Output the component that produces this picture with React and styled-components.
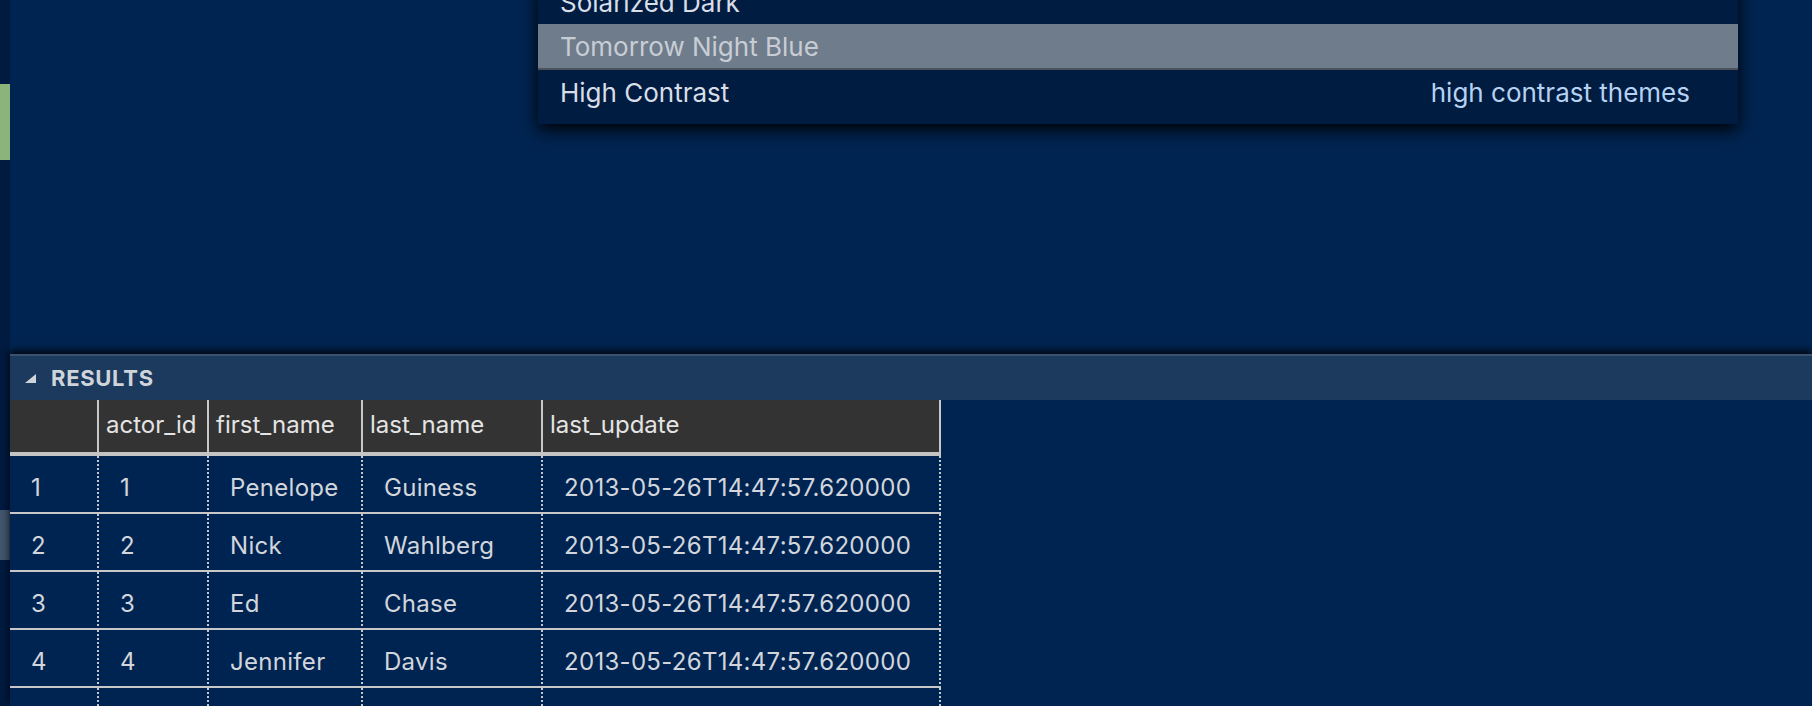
import React from "react";
import styled, { createGlobalStyle } from "styled-components";

const GlobalStyle = createGlobalStyle`
  html, body {
    margin: 0;
    padding: 0;
    background: #002451;
  }
  body {
    width: 1812px;
    height: 706px;
    overflow: hidden;
    font-family: Inter, "Noto Sans", sans-serif;
  }
`;

const Window = styled.div`
  display: flex;
  width: 1812px;
  height: 706px;
  background: #002451;
  overflow: hidden;
`;

const Gutter = styled.div`
  flex: none;
  width: 10px;
  background: #001a40;
  display: flex;
  flex-direction: column;
`;

const Marker = styled.div`
  flex: none;
  margin-top: ${(p) => p.$offset}px;
  height: ${(p) => p.$size}px;
  background: ${(p) => p.$color};
`;

const Main = styled.div`
  flex: 1;
  display: flex;
  flex-direction: column;
  min-width: 0;
`;

const EditorArea = styled.div`
  position: relative;
  flex: none;
  height: 354px;
  background: #002451;
`;

const QuickPick = styled.div`
  position: absolute;
  top: -20px;
  left: 528px;
  width: 1200px;
  padding-bottom: 10px;
  background: #001c40;
  box-shadow: 0 6px 16px rgba(0, 0, 0, 0.95);
  z-index: 2;
`;

const PickRow = styled.div`
  box-sizing: border-box;
  display: flex;
  align-items: center;
  justify-content: space-between;
  padding: 0 48px 0 22px;
  font-size: 26px;
  color: ${(p) => (p.$selected ? "#c8cdd5" : "#d8dee7")};
  background: ${(p) => (p.$selected ? "#6f7c8b" : "transparent")};
  border-top: ${(p) => (p.$separator ? "2px solid #4b525b" : "none")};
  height: ${(p) => (p.$separator ? 46 : 44)}px;
  white-space: nowrap;
`;

const PickDesc = styled.span`
  color: #b6d2f2;
`;

const Panel = styled.div`
  flex: 1;
  display: flex;
  flex-direction: column;
  background: #002451;
  box-shadow: 0 -3px 8px rgba(0, 0, 0, 0.9);
  position: relative;
  overflow: hidden;
`;

const PanelHeader = styled.div`
  flex: none;
  height: 46px;
  box-sizing: border-box;
  border-top: 2px solid #3a5172;
  background: #1c395e;
  display: flex;
  align-items: center;
  gap: 15px;
  padding-left: 15px;
  color: #cfd4db;
`;

const Twistie = styled.svg`
  width: 11px;
  height: 9px;
  margin-top: 1px;
`;

const PanelTitle = styled.span`
  font-size: 22px;
  font-weight: 700;
  letter-spacing: 0.7px;
`;

const Grid = styled.table`
  border-collapse: separate;
  border-spacing: 0;
  table-layout: fixed;
  width: 931px;
`;

const HeadCell = styled.th`
  box-sizing: border-box;
  height: 56px;
  padding: 0 7px 4px;
  text-align: left;
  font-weight: 400;
  font-size: 24px;
  color: #e4e4e4;
  background: #333333;
  border-bottom: 4px solid #c4c4c4;
  border-left: ${(p) => (p.$first ? "none" : "2px solid #c8c8c8")};
  border-right: ${(p) => (p.$last ? "2px solid #c8c8c8" : "none")};
  white-space: nowrap;
  overflow: hidden;
`;

const BodyCell = styled.td`
  box-sizing: border-box;
  height: 58px;
  padding: 6px 21px 0 21px;
  font-size: 24px;
  letter-spacing: 0.3px;
  color: #d2d6dc;
  border-bottom: 2px solid #c8c8c8;
  border-left: ${(p) => (p.$first ? "none" : "2px dotted #c8c8c8")};
  border-right: ${(p) => (p.$last ? "2px dotted #c8c8c8" : "none")};
  white-space: nowrap;
  overflow: hidden;
`;

const columns = [
  { key: "n", label: "", width: 87 },
  { key: "actor_id", label: "actor_id", width: 110 },
  { key: "first_name", label: "first_name", width: 154 },
  { key: "last_name", label: "last_name", width: 180 },
  { key: "last_update", label: "last_update", width: 400 },
];

const rows = [
  { n: 1, actor_id: 1, first_name: "Penelope", last_name: "Guiness" },
  { n: 2, actor_id: 2, first_name: "Nick", last_name: "Wahlberg" },
  { n: 3, actor_id: 3, first_name: "Ed", last_name: "Chase" },
  { n: 4, actor_id: 4, first_name: "Jennifer", last_name: "Davis" },
  { n: 5, actor_id: 5, first_name: "Johnny", last_name: "Lollobrigida" },
].map((r) => ({ ...r, last_update: "2013-05-26T14:47:57.620000" }));

export default function App() {
  return (
    <>
      <GlobalStyle />
      <Window>
        <Gutter>
          <Marker $offset={84} $size={76} $color="#8ab47a" />
          <Marker $offset={350} $size={50} $color="#42566f" />
        </Gutter>
        <Main>
          <EditorArea>
            <QuickPick>
              <PickRow>Solarized Dark</PickRow>
              <PickRow $selected>Tomorrow Night Blue</PickRow>
              <PickRow $separator>
                <span>High Contrast</span>
                <PickDesc>high contrast themes</PickDesc>
              </PickRow>
            </QuickPick>
          </EditorArea>
          <Panel>
            <PanelHeader>
              <Twistie viewBox="0 0 11 9">
                <path d="M11 0 L11 9 L0 9 Z" fill="#d0d4da" />
              </Twistie>
              <PanelTitle>RESULTS</PanelTitle>
            </PanelHeader>
            <Grid>
              <colgroup>
                {columns.map((c) => (
                  <col key={c.key} style={{ width: c.width }} />
                ))}
              </colgroup>
              <thead>
                <tr>
                  {columns.map((c, i) => (
                    <HeadCell key={c.key} $first={i === 0} $last={i === columns.length - 1}>
                      {c.label}
                    </HeadCell>
                  ))}
                </tr>
              </thead>
              <tbody>
                {rows.map((r) => (
                  <tr key={r.n}>
                    {columns.map((c, i) => (
                      <BodyCell key={c.key} $first={i === 0} $last={i === columns.length - 1}>
                        {r[c.key]}
                      </BodyCell>
                    ))}
                  </tr>
                ))}
              </tbody>
            </Grid>
          </Panel>
        </Main>
      </Window>
    </>
  );
}
